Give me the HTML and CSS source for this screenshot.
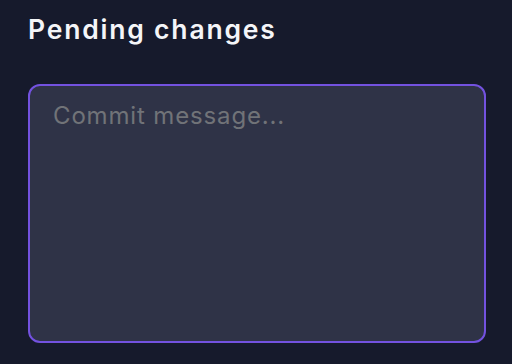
FILE: index.html
```html
<!DOCTYPE html>
<html>
<head>
<meta charset="utf-8">
<link rel="stylesheet" href="styles.css">
</head>
<body>
<div class="panel">
  <h2 class="title">Pending changes</h2>
  <textarea class="message" placeholder="Commit message..."></textarea>
</div>
</body>
</html>
```
FILE: styles.css
```css
html, body {
  margin: 0;
  padding: 0;
  background: #161a2c;
}
.panel {
  padding: 14px 26px 0 28px;
  display: flex;
  flex-direction: column;
  font-family: Inter, "Open Sans", sans-serif;
}
.title {
  margin: 0;
  font-size: 26.5px;
  line-height: 30px;
  font-weight: 600;
  color: #f4f5f8;
  letter-spacing: 1.8px;
}
.message {
  margin-top: 40px;
  box-sizing: border-box;
  width: 458px;
  height: 259px;
  border: 2px solid #7352e0;
  border-radius: 12px;
  background: #2f3347;
  padding: 15px 23px;
  font-family: Inter, "Open Sans", sans-serif;
  font-size: 24px;
  letter-spacing: 0.85px;
  color: #e6e7ee;
  resize: none;
  outline: none;
}
.message::placeholder {
  color: #717378;
}
```
